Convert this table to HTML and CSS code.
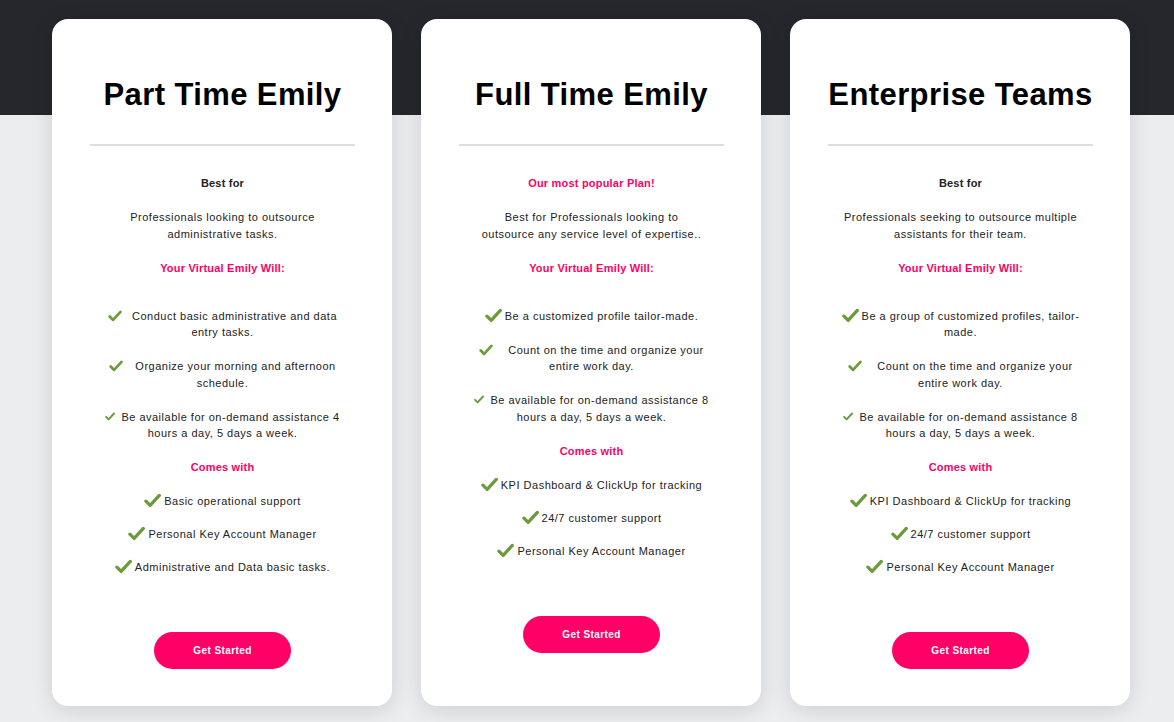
FILE: index.html
```html
<!DOCTYPE html>
<html lang="en">
<head>
<meta charset="utf-8">
<title>Pricing</title>
<link rel="stylesheet" href="styles.css">
</head>
<body>
<svg width="0" height="0" class="defs" aria-hidden="true">
  <symbol id="chk" viewBox="0 0 16 14"><path d="M1.8 7.6 L5.8 11.6 L14.4 2.2" fill="none" stroke="currentColor" stroke-width="3.1" stroke-linecap="round" stroke-linejoin="round"/></symbol>
</svg>
<main class="pricing">
  <section class="card">
    <h2 class="title">Part Time Emily</h2>
    <hr class="divider">
    <p class="strong">Best for</p>
    <p>Professionals looking to outsource<br>administrative tasks.</p>
    <p class="pink">Your Virtual Emily Will:</p>
    <div class="list">
      <p><svg class="ck ck-m gap-l"><use href="#chk"/></svg>Conduct basic administrative and data<br>entry tasks.</p>
      <p><svg class="ck ck-m gap-xl"><use href="#chk"/></svg>Organize your morning and afternoon<br>schedule.</p>
      <p><svg class="ck ck-s gap-m"><use href="#chk"/></svg>Be available for on-demand assistance 4<br>hours a day, 5 days a week.</p>
    </div>
    <p class="pink">Comes with</p>
    <div class="list-plain">
      <p><svg class="ck ck-l"><use href="#chk"/></svg>Basic operational support</p>
      <p><svg class="ck ck-l"><use href="#chk"/></svg>Personal Key Account Manager</p>
      <p><svg class="ck ck-l"><use href="#chk"/></svg>Administrative and Data basic tasks.</p>
    </div>
    <a class="btn" href="#">Get Started</a>
  </section>

  <section class="card">
    <h2 class="title">Full Time Emily</h2>
    <hr class="divider">
    <p class="pink">Our most popular Plan!</p>
    <p>Best for Professionals looking to<br>outsource any service level of expertise..</p>
    <p class="pink">Your Virtual Emily Will:</p>
    <div class="list">
      <p><svg class="ck ck-l"><use href="#chk"/></svg>Be a customized profile tailor-made.</p>
      <p><svg class="ck ck-m gap-xxl"><use href="#chk"/></svg>Count on the time and organize your<br>entire work day.</p>
      <p><svg class="ck ck-s gap-m"><use href="#chk"/></svg>Be available for on-demand assistance 8<br>hours a day, 5 days a week.</p>
    </div>
    <p class="pink">Comes with</p>
    <div class="list-plain">
      <p><svg class="ck ck-l"><use href="#chk"/></svg>KPI Dashboard &amp; ClickUp for tracking</p>
      <p><svg class="ck ck-l"><use href="#chk"/></svg>24/7 customer support</p>
      <p><svg class="ck ck-l"><use href="#chk"/></svg>Personal Key Account Manager</p>
    </div>
    <a class="btn" href="#">Get Started</a>
  </section>

  <section class="card">
    <h2 class="title">Enterprise Teams</h2>
    <hr class="divider">
    <p class="strong">Best for</p>
    <p>Professionals seeking to outsource multiple<br>assistants for their team.</p>
    <p class="pink">Your Virtual Emily Will:</p>
    <div class="list">
      <p><svg class="ck ck-l"><use href="#chk"/></svg>Be a group of customized profiles, tailor-<br>made.</p>
      <p><svg class="ck ck-m gap-xxl"><use href="#chk"/></svg>Count on the time and organize your<br>entire work day.</p>
      <p><svg class="ck ck-s gap-m"><use href="#chk"/></svg>Be available for on-demand assistance 8<br>hours a day, 5 days a week.</p>
    </div>
    <p class="pink">Comes with</p>
    <div class="list-plain">
      <p><svg class="ck ck-l"><use href="#chk"/></svg>KPI Dashboard &amp; ClickUp for tracking</p>
      <p><svg class="ck ck-l"><use href="#chk"/></svg>24/7 customer support</p>
      <p><svg class="ck ck-l"><use href="#chk"/></svg>Personal Key Account Manager</p>
    </div>
    <a class="btn" href="#">Get Started</a>
  </section>
</main>
</body>
</html>
```

FILE: styles.css
```css
* { box-sizing: border-box; }

html, body {
  margin: 0;
  padding: 0;
}

body {
  min-height: 722px;
  background: linear-gradient(#25272c 0, #25272c 115px, #ecedef 115px, #ecedef 100%);
  font-family: "Liberation Sans", Arial, sans-serif;
  color: #222;
}

.defs {
  position: absolute;
  width: 0;
  height: 0;
  overflow: hidden;
}

.pricing {
  display: flex;
  justify-content: center;
  align-items: stretch;
  gap: 29px;
  padding: 19px 0 16px 8px;
}

.card {
  width: 340px;
  background: #fff;
  border-radius: 16px;
  box-shadow: 0 4px 22px rgba(0, 0, 0, 0.13);
  padding: 57px 37px 37px 38px;
  text-align: center;
  display: flex;
  flex-direction: column;
  align-items: stretch;
}

.title {
  margin: 0 -20px;
  font-size: 31px;
  line-height: 38px;
  font-weight: 700;
  color: #000;
  letter-spacing: 0.4px;
  white-space: nowrap;
}

.divider {
  margin: 30px 0 0;
  border: 0;
  height: 2px;
  background: #dedede;
}

.card p {
  margin: 0 0 17.5px;
  font-size: 11px;
  line-height: 16.5px;
  letter-spacing: 0.5px;
}

.card > p:first-of-type {
  margin-top: 29px;
}

.card p.strong,
.card p.pink {
  letter-spacing: 0.2px;
}

.strong {
  font-weight: 700;
}

.pink {
  color: #ff0066;
  font-weight: 700;
}

.list {
  margin-top: 14px;
}

.ck {
  display: inline-block;
  color: #6c9b3c;
  vertical-align: -2px;
}

.ck-s { width: 10px; height: 9px; margin-right: 6px; vertical-align: 0; }
.ck-m { width: 14px; height: 12px; margin-right: 8px; }
.ck-l { width: 17px; height: 15px; margin-right: 3px; vertical-align: -3px; }

.gap-m { margin-right: 6px; }
.gap-l { margin-right: 10px; }
.gap-xl { margin-right: 12px; }
.gap-xxl { margin-right: 15px; }

.list-plain p {
  margin-bottom: 16.5px;
}

.btn {
  align-self: center;
  margin-top: 40px;
  width: 137px;
  height: 37px;
  border-radius: 19px;
  background: #ff0066;
  color: #fff;
  font-size: 10px;
  font-weight: 700;
  line-height: 37px;
  text-decoration: none;
  letter-spacing: 0.4px;
}
```
